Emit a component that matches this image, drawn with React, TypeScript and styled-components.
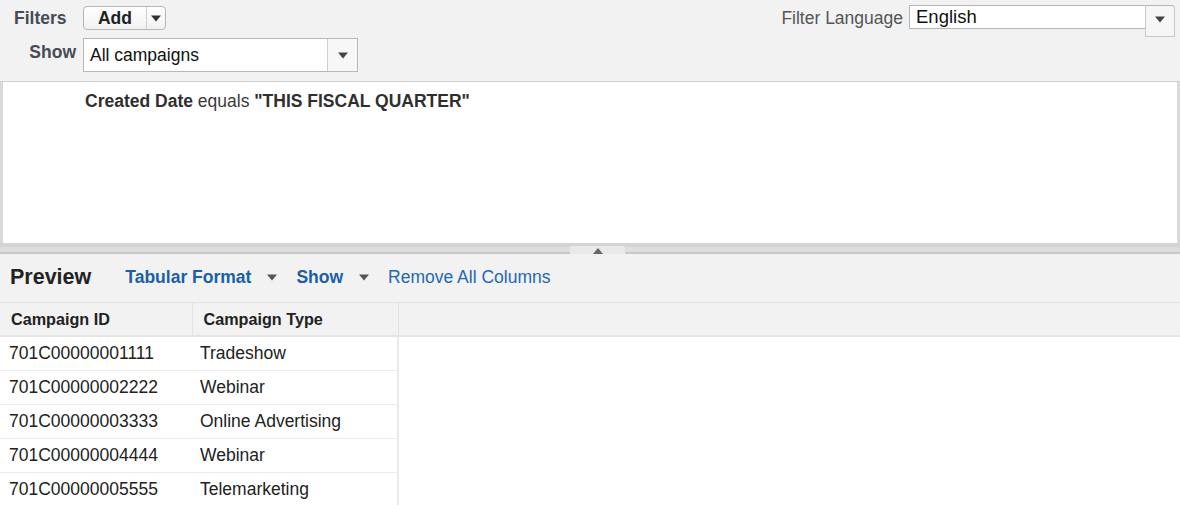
import styled, { createGlobalStyle } from 'styled-components'

const GlobalStyle = createGlobalStyle`
  html, body {
    margin: 0;
    padding: 0;
    background: #ffffff;
  }
  body {
    font-family: "Liberation Sans", Arial, sans-serif;
    overflow: hidden;
  }
`

type Campaign = {
  id: string
  type: string
}

const campaigns: Campaign[] = [
  { id: '701C00000001111', type: 'Tradeshow' },
  { id: '701C00000002222', type: 'Webinar' },
  { id: '701C00000003333', type: 'Online Advertising' },
  { id: '701C00000004444', type: 'Webinar' },
  { id: '701C00000005555', type: 'Telemarketing' },
]

const Caret = ({ up = false, color = '#444' }: { up?: boolean; color?: string }) => (
  <svg width="10" height="7" viewBox="0 0 10 7" aria-hidden="true">
    <path d={up ? 'M0 7 L5 1 L10 7 Z' : 'M0 0.5 L10 0.5 L5 6.5 Z'} fill={color} />
  </svg>
)

export default function App() {
  return (
    <>
      <GlobalStyle />
      <Page>
        <FilterBar>
          <FilterGrid>
            <FilterLabel $start>Filters</FilterLabel>
            <SplitButton>
              <ButtonMain>Add</ButtonMain>
              <ButtonArrow>
                <Caret color="#333" />
              </ButtonArrow>
            </SplitButton>
            <FilterLabel>Show</FilterLabel>
            <Select $width={275} $height={34}>
              <SelectValue $size={17.5}>All campaigns</SelectValue>
              <SelectArrow $width={29}>
                <Caret color="#444" />
              </SelectArrow>
            </Select>
          </FilterGrid>
          <LanguageBox>
            <LanguageLabel>Filter Language</LanguageLabel>
            <LanguageSelect>
              <LanguageValue>English</LanguageValue>
              <LanguageArrow>
                <Caret color="#444" />
              </LanguageArrow>
            </LanguageSelect>
          </LanguageBox>
        </FilterBar>

        <Criteria>
          <CriteriaLine>
            <b>Created Date</b> equals <b>"THIS FISCAL QUARTER"</b>
          </CriteriaLine>
        </Criteria>

        <Splitter>
          <SplitterHandle>
            <Caret up color="#666" />
          </SplitterHandle>
        </Splitter>

        <PreviewBar>
          <PreviewTitle>Preview</PreviewTitle>
          <MenuLink $bold>Tabular Format</MenuLink>
          <MenuCaret>
            <Caret color="#555" />
          </MenuCaret>
          <MenuLink $bold>Show</MenuLink>
          <MenuCaret>
            <Caret color="#555" />
          </MenuCaret>
          <MenuLink>Remove All Columns</MenuLink>
        </PreviewBar>

        <Table>
          <colgroup>
            <col style={{ width: 192 }} />
            <col style={{ width: 206 }} />
            <col />
          </colgroup>
          <thead>
            <tr>
              <HeadCell>Campaign ID</HeadCell>
              <HeadCell>Campaign Type</HeadCell>
              <HeadCell />
            </tr>
          </thead>
          <tbody>
            {campaigns.map((c) => (
              <tr key={c.id}>
                <BodyCell>{c.id}</BodyCell>
                <BodyCell $last>{c.type}</BodyCell>
                <EmptyCell />
              </tr>
            ))}
          </tbody>
        </Table>
      </Page>
    </>
  )
}

const Page = styled.div`
  width: 1180px;
  height: 505px;
  display: flex;
  flex-direction: column;
  overflow: hidden;
`

const FilterBar = styled.div`
  height: 81px;
  flex: none;
  display: flex;
  justify-content: space-between;
  background: #f2f2f2;
  border-bottom: 1px solid #cfcfcf;
`

const FilterGrid = styled.div`
  display: grid;
  grid-template-columns: 76px auto;
  grid-template-rows: 24px 34px;
  column-gap: 7px;
  row-gap: 8px;
  padding-top: 6px;
  align-items: center;
`

const FilterLabel = styled.span<{ $start?: boolean }>`
  justify-self: ${(p) => (p.$start ? 'start' : 'end')};
  margin-left: ${(p) => (p.$start ? '14px' : '0')};
  margin-top: ${(p) => (p.$start ? '1px' : '-5px')};
  font-size: 17.5px;
  font-weight: bold;
  color: #474b55;
`

const SplitButton = styled.div`
  display: flex;
  width: 83px;
  height: 24px;
  box-sizing: border-box;
  border: 1px solid #b5b5b5;
  border-radius: 4px;
  background: linear-gradient(#ffffff, #f1f1f1);
  overflow: hidden;
`

const ButtonMain = styled.span`
  width: 62px;
  display: flex;
  align-items: center;
  justify-content: center;
  font-size: 17.5px;
  font-weight: bold;
  color: #222;
  border-right: 1px solid #d0d0d0;
`

const ButtonArrow = styled.span`
  flex: 1;
  display: flex;
  align-items: center;
  justify-content: center;
`

const Select = styled.div<{ $width: number; $height: number }>`
  display: flex;
  width: ${(p) => p.$width}px;
  height: ${(p) => p.$height}px;
  box-sizing: border-box;
  border: 1px solid #b8b8b8;
  background: #ffffff;
`

const SelectValue = styled.span<{ $size: number }>`
  flex: 1;
  display: flex;
  align-items: center;
  padding-left: 6px;
  font-size: ${(p) => p.$size}px;
  color: #111;
`

const SelectArrow = styled.span<{ $width: number }>`
  width: ${(p) => p.$width}px;
  display: flex;
  align-items: center;
  justify-content: center;
  background: #f7f7f7;
  border-left: 1px solid #cfcfcf;
`

const LanguageBox = styled.div`
  display: flex;
  align-items: flex-start;
  padding-top: 5px;
  margin-right: 5px;
`

const LanguageLabel = styled.span`
  margin-top: 3px;
  margin-right: 6px;
  font-size: 17.5px;
  color: #555;
`

const LanguageSelect = styled.div`
  display: flex;
  align-items: flex-start;
`

const LanguageValue = styled.span`
  width: 236px;
  height: 24px;
  box-sizing: border-box;
  padding-left: 6px;
  display: flex;
  align-items: center;
  border: 1px solid #b5b5b5;
  border-right: none;
  background: #ffffff;
  font-size: 18.5px;
  color: #111;
`

const LanguageArrow = styled.span`
  width: 30px;
  height: 32px;
  box-sizing: border-box;
  display: flex;
  align-items: center;
  justify-content: center;
  padding-bottom: 4px;
  background: #f6f6f6;
  border: 1px solid #c8c8c8;
  border-top-color: #b5b5b5;
  border-radius: 0 3px 0 0;
`

const Criteria = styled.div`
  height: 161px;
  flex: none;
  box-sizing: border-box;
  padding: 9px 0 0 85px;
  background: #ffffff;
  border-left: 3px solid #dadada;
  border-right: 3px solid #dadada;
`

const CriteriaLine = styled.div`
  font-size: 17.5px;
  color: #3a3a3a;
  margin-left: -3px;

  b {
    color: #2f2f2f;
  }
`

const Splitter = styled.div`
  height: 11px;
  flex: none;
  position: relative;
  background: linear-gradient(#d4d4d4 0, #d4d4d4 4px, #dedede 4px, #dedede 9px, #c8c8c8 9px);
`

const SplitterHandle = styled.div`
  position: absolute;
  left: 570px;
  top: 3px;
  width: 55px;
  height: 8px;
  display: flex;
  align-items: center;
  justify-content: center;
  background: #e9e9e9;
  border-radius: 2px 2px 0 0;
`

const PreviewBar = styled.div`
  height: 47px;
  flex: none;
  display: flex;
  align-items: center;
  padding: 0 0 1px 10px;
  background: #f2f2f2;
`

const PreviewTitle = styled.span`
  font-size: 21.5px;
  font-weight: bold;
  color: #222;
  margin-right: 34px;
`

const MenuLink = styled.span<{ $bold?: boolean }>`
  font-size: 17.5px;
  font-weight: ${(p) => (p.$bold ? 'bold' : 'normal')};
  color: ${(p) => (p.$bold ? '#1a5fa8' : '#2468b4')};
  cursor: pointer;
`

const MenuCaret = styled.span`
  display: flex;
  margin: 0 19px 0 16px;
`

const Table = styled.table`
  width: 1180px;
  border-collapse: collapse;
  table-layout: fixed;
`

const HeadCell = styled.th`
  height: 32px;
  padding: 0 0 0 11px;
  text-align: left;
  font-size: 16.2px;
  font-weight: bold;
  color: #222;
  background: #f2f2f2;
  border-top: 1px solid #e2e2e2;
  border-bottom: 2px solid #e4e4e4;
  border-left: 1px solid #e2e2e2;

  &:first-child {
    border-left: none;
  }
`

const BodyCell = styled.td<{ $last?: boolean }>`
  height: 33px;
  padding: 0 0 0 9px;
  font-size: 17.5px;
  color: #222;
  background: #ffffff;
  border-bottom: 1px solid #ebebeb;
  border-right: ${(p) => (p.$last ? '2px solid #e9e9e9' : 'none')};
  white-space: nowrap;

  & + & {
    padding-left: 8px;
  }
`

const EmptyCell = styled.td`
  background: #ffffff;
`
